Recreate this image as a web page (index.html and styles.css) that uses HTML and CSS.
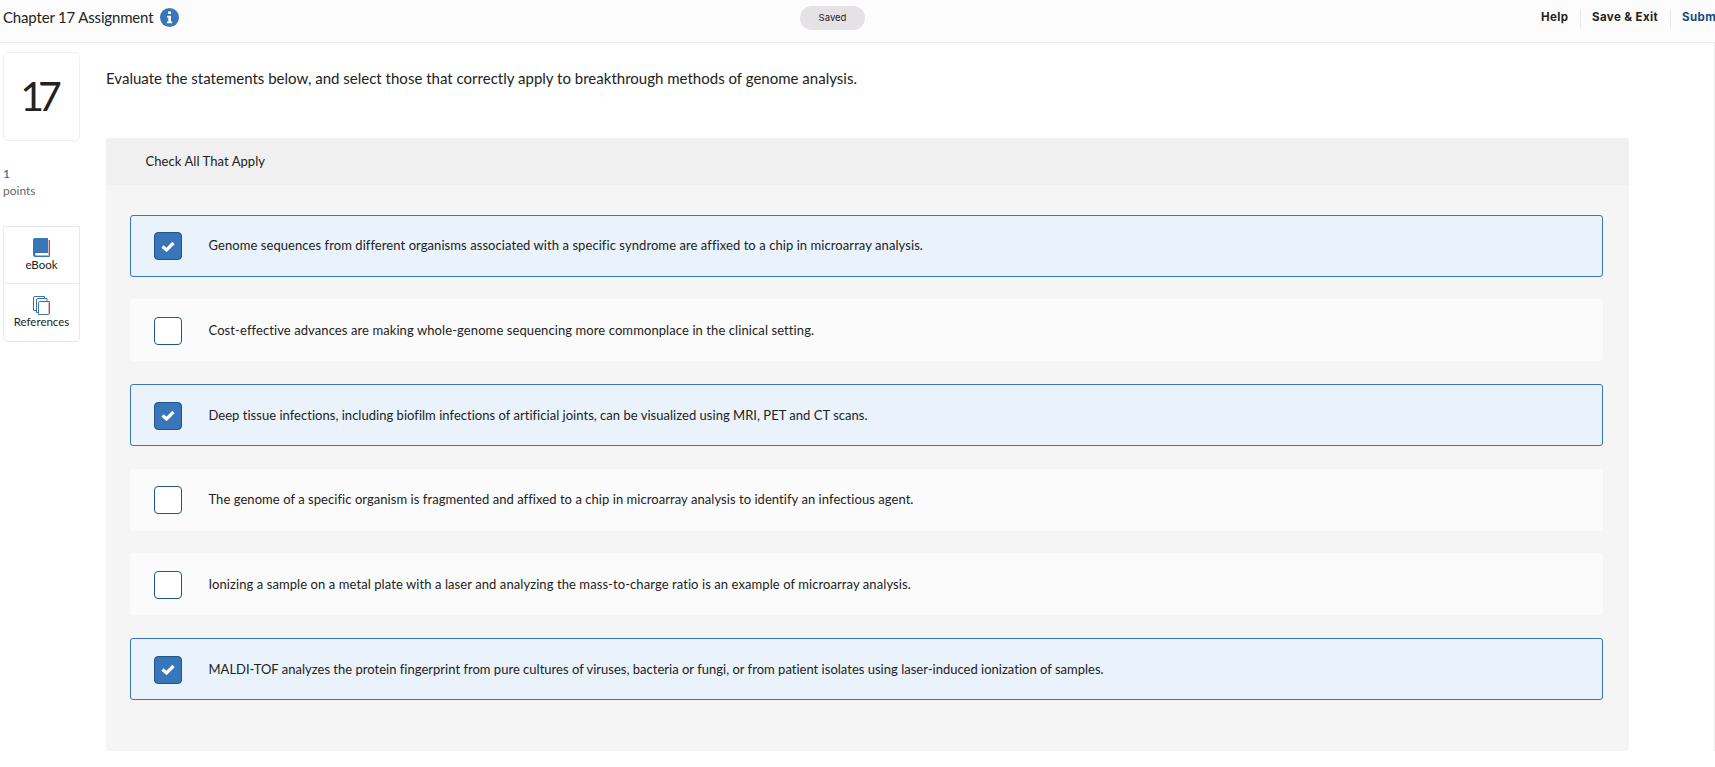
FILE: index.html
```html
<!DOCTYPE html>
<html lang="en">
<head>
  <meta charset="utf-8">
  <title>Chapter 17 Assignment</title>
  <link rel="stylesheet" href="styles.css">
</head>
<body>
  <header class="header">
    <div class="title">
      <span class="title-text">Chapter 17 Assignment</span>
      <svg class="info" viewBox="0 0 19 19">
        <circle cx="9.5" cy="9.5" r="9.5" fill="#3875b9"/>
        <path d="M8 3.5h3v2.6H8zM7 7.7h4v5.8h1.2v1.8H7v-1.8h1.3V9.4H7z" fill="#fff"/>
      </svg>
    </div>
    <span class="saved">Saved</span>
    <nav class="nav">
      <a class="help">Help</a>
      <a class="exit">Save &amp; Exit</a>
      <a class="submit">Submit</a>
    </nav>
  </header>

  <div class="content">
    <aside class="sidebar">
      <div class="number">17</div>
      <div class="points">
        <span class="points-value">1</span>
        <span class="points-label">points</span>
      </div>
      <div class="tools">
        <a class="tool">
          <svg class="tool-icon" viewBox="0 0 17 19">
            <path d="M15.5 2v15" stroke="#e2b6b4"/>
            <path d="M2 0h13v15H3.5q-1.5 0-1.5 1.3t1.5 1.2H16.5V19H2.5Q0 19 0 16.5V2Q0 0 2 0z" fill="#3875b9"/>
            <path d="M16.5 2v16.5" stroke="#3875b9"/>
          </svg>
          <span class="ebook">eBook</span>
        </a>
        <a class="tool">
          <svg class="tool-icon" viewBox="0 0 17 19" fill="#fff" stroke="#3d70ae">
            <path d="M.5 14.5V2Q.5.5 2 .5h9.5v14z"/>
            <path d="M3.5 16.5V4Q3.5 2.5 5 2.5h9v14z"/>
            <path d="M5.5 18.5v-12Q5.5 5.5 7 5.5h9.500v11.500q0 1.500-1.500 1.500z"/>
            <path d="M15.5 6.5V17" stroke="#e2b6b4"/>
          </svg>
          <span class="references">References</span>
        </a>
      </div>
    </aside>

    <main class="main">
      <p class="question">Evaluate the statements below, and select those that correctly apply to breakthrough methods of genome analysis.</p>
      <section class="panel">
        <div class="panel-header">Check All That Apply</div>
        <div class="options">
          <div class="option selected">
            <span class="checkbox"><svg viewBox="0 0 14 11"><path d="M1.5 5.5l4 3.5 7-7" /></svg></span>
            <span class="label label-1">Genome sequences from different organisms associated with a specific syndrome are affixed to a chip in microarray analysis.</span>
          </div>
          <div class="option">
            <span class="checkbox"></span>
            <span class="label label-2">Cost-effective advances are making whole-genome sequencing more commonplace in the clinical setting.</span>
          </div>
          <div class="option selected">
            <span class="checkbox"><svg viewBox="0 0 14 11"><path d="M1.5 5.5l4 3.5 7-7" /></svg></span>
            <span class="label label-3">Deep tissue infections, including biofilm infections of artificial joints, can be visualized using MRI, PET and CT scans.</span>
          </div>
          <div class="option">
            <span class="checkbox"></span>
            <span class="label label-4">The genome of a specific organism is fragmented and affixed to a chip in microarray analysis to identify an infectious agent.</span>
          </div>
          <div class="option">
            <span class="checkbox"></span>
            <span class="label label-5">Ionizing a sample on a metal plate with a laser and analyzing the mass-to-charge ratio is an example of microarray analysis.</span>
          </div>
          <div class="option selected">
            <span class="checkbox"><svg viewBox="0 0 14 11"><path d="M1.5 5.5l4 3.5 7-7" /></svg></span>
            <span class="label label-6">MALDI-TOF analyzes the protein fingerprint from pure cultures of viruses, bacteria or fungi, or from patient isolates using laser-induced ionization of samples.</span>
          </div>
        </div>
      </section>
    </main>
  </div>
</body>
</html>
```
FILE: styles.css
```css
* {
    box-sizing: border-box;
}

body {
    margin: 0;
    height: 767px;
    overflow: hidden;
    background: #fff;
    color: #222;
    font-family: "Lato", "Open Sans", sans-serif;
    font-variant-ligatures: none;
}

.header {
    display: grid;
    grid-template-columns: 800px 65px 1fr;
    height: 43px;
    background: #fcfcfc;
    border-bottom: 1px solid #eee;
    white-space: nowrap;
}

.title {
    display: flex;
    padding: 8px 0 0 3px;
}

.title-text {
    width: 157px;
    font-size: 15px;
    letter-spacing: -0.17px;
    line-height: 18px;
}

.info {
    width: 19px;
    height: 19px;
}

.saved {
    height: 24px;
    margin-top: 6px;
    border-radius: 12px;
    background: #e4e2e5;
    font-family: "Inter", sans-serif;
    font-size: 9.5px;
    line-height: 24px;
    text-align: center;
}

.nav {
    display: flex;
    padding: 9px 0 0 676px;
    overflow: hidden;
    font-family: "Inter", sans-serif;
    font-size: 11.5px;
    font-weight: bold;
    letter-spacing: 0.4px;
    line-height: 16px;
}

.nav a {
    height: 19px;
    flex: none;
}

.help {
    width: 40px;
    border-right: 1px solid #e8e8e8;
}

.exit {
    width: 90px;
    padding-left: 11px;
    border-right: 1px solid #e8e8e8;
}

.submit {
    padding-left: 11px;
    color: #174a87;
}

.content {
    display: flex;
    height: 708px;
    border-right: 1px solid #eee;
}

.sidebar {
    width: 106px;
    padding: 9px 0 0 3px;
}

.number {
    width: 77px;
    height: 89px;
    padding-right: 7px;
    border: 1px solid #eee;
    border-radius: 5px;
    font-size: 41px;
    letter-spacing: -6px;
    line-height: 86px;
    text-align: center;
}

.points {
    display: flex;
    flex-direction: column;
    height: 85px;
    padding-top: 25px;
}

.points-value {
    color: #24588f;
    font-size: 12px;
    line-height: 16px;
}

.points-label {
    color: #666;
    font-size: 12px;
    line-height: 17px;
}

.tools {
    width: 77px;
    height: 116px;
    border: 1px solid #e8e8e8;
    border-radius: 0 0 5px 5px;
}

.tool {
    display: flex;
    flex-direction: column;
    align-items: center;
    height: 56px;
    padding-top: 11px;
    font-size: 11.5px;
    line-height: 15px;
}

.tool + .tool {
    padding-top: 12px;
    border-top: 1px solid #e8e8e8;
    line-height: 13px;
}

.tool-icon {
    width: 17px;
    height: 19px;
}

.main {
    width: 1523px;
}

.question {
    height: 95px;
    margin: 0;
    padding-top: 26px;
    font-size: 15px;
    letter-spacing: 0.01px;
    line-height: 19px;
    white-space: nowrap;
}

.panel {
    height: 613px;
    border-radius: 4px;
    background: #f5f5f5;
}

.panel-header {
    height: 47px;
    padding-left: 39.5px;
    border-radius: 3px 3px 0 0;
    background: #f0f0f0;
    font-size: 13px;
    letter-spacing: 0.07px;
    line-height: 47px;
}

.options {
    display: flex;
    flex-direction: column;
    gap: 22.7px;
    padding: 29.7px 26px 0 24px;
}

.option {
    display: flex;
    align-items: center;
    height: 62px;
    padding-left: 23px;
    border: 1px solid transparent;
    border-radius: 3px;
    background: #fbfbfb;
    font-size: 13px;
    line-height: 20px;
    white-space: nowrap;
}

.option.selected {
    border-color: #3875b9;
    background: #eaf2fb;
}

.checkbox {
    display: flex;
    align-items: center;
    justify-content: center;
    width: 28px;
    height: 28px;
    margin: 1px 26.5px 0 0;
    border: 1px solid #1f568e;
    border-radius: 4px;
    background: #fff;
}

.selected .checkbox {
    background: #3875b9;
}

.checkbox svg {
    width: 14px;
    height: 11px;
    fill: none;
    stroke: #fff;
    stroke-width: 3.2;
}

.label {
    padding-bottom: 1px;
}

.label-1 {
    letter-spacing: 0.07px;
}

.label-2 {
    letter-spacing: 0.09px;
}

.label-3 {
    letter-spacing: 0.025px;
}

.label-4 {
    letter-spacing: 0.055px;
}

.label-5 {
    letter-spacing: 0.08px;
}

.label-6 {
    letter-spacing: 0.01px;
}
```
